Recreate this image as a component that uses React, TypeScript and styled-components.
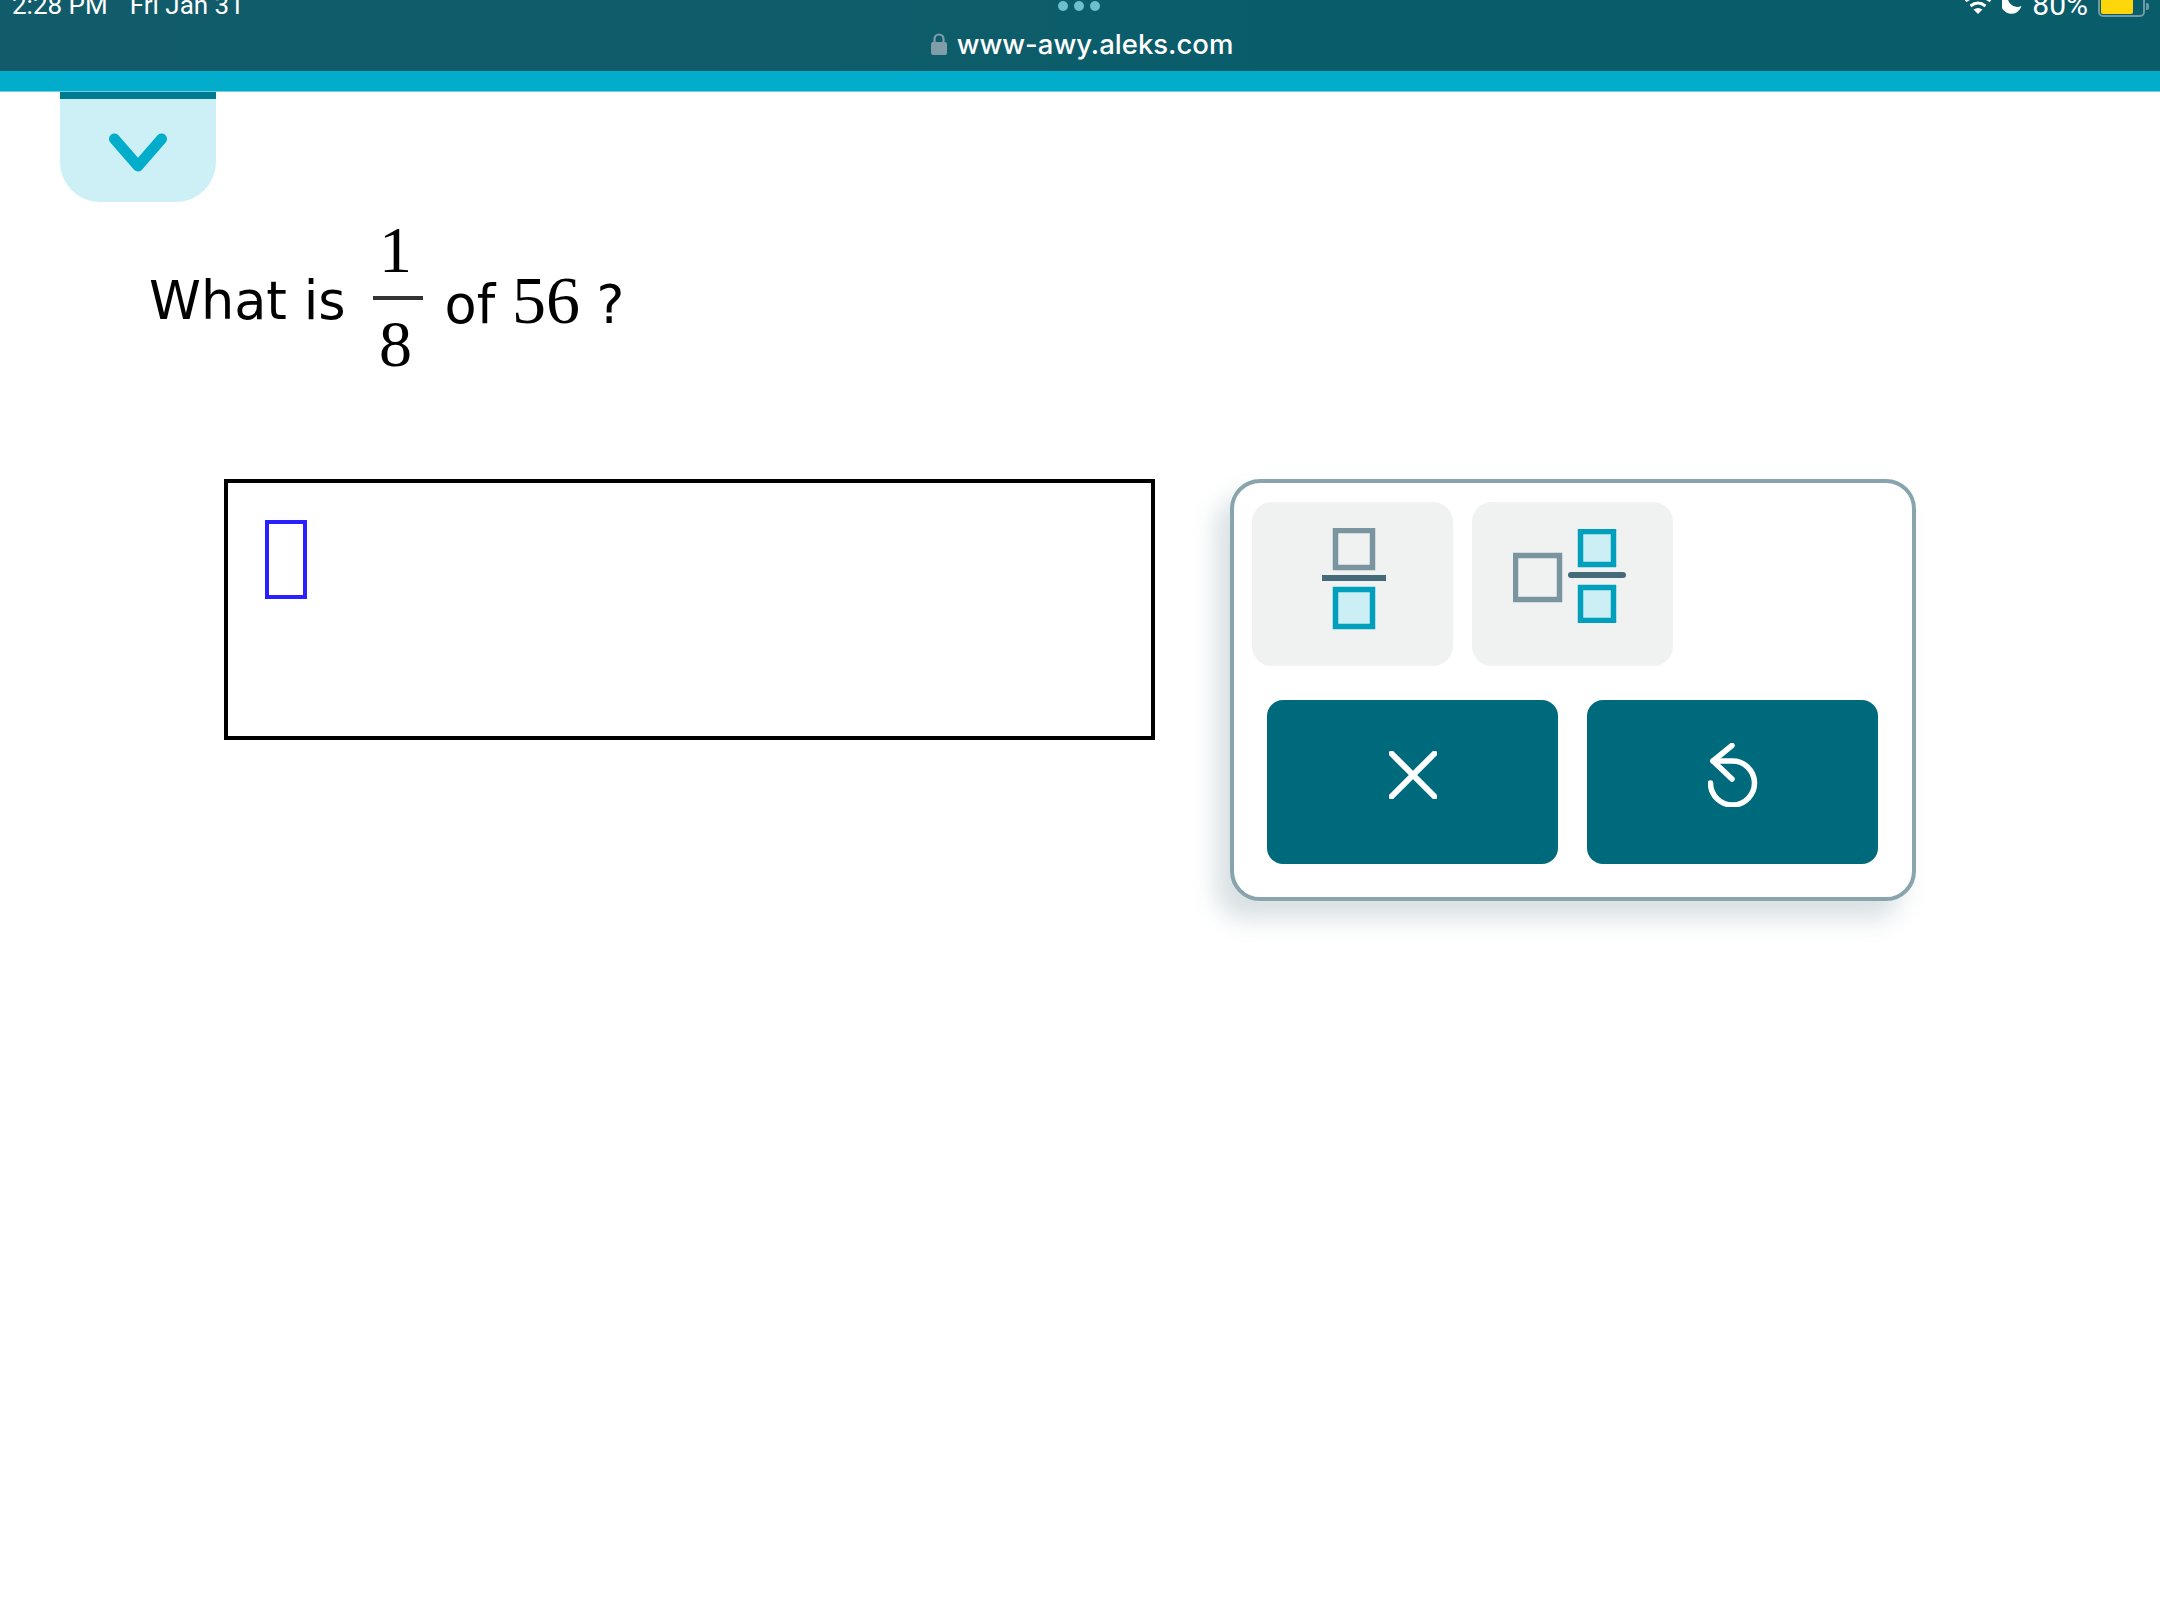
import React from "react";
import styled, { createGlobalStyle } from "styled-components";

const GlobalStyle = createGlobalStyle`
    html, body {
        margin: 0;
        padding: 0;
        background: #ffffff;
    }
`;

const Page = styled.div`
    width: 2160px;
    height: 1606px;
    overflow: hidden;
    background: #ffffff;
`;

const Chrome = styled.header`
    height: 71px;
    overflow: hidden;
    display: flex;
    flex-direction: column;
    background: linear-gradient(90deg, #115b6a 0%, #105c6b 35%, #095d6a 60%, #095c69 100%);
    color: #ffffff;
`;

const StatusRow = styled.div`
    height: 24px;
    margin-top: -7px;
    display: grid;
    grid-template-columns: 1fr auto 1fr;
    align-items: center;
    padding: 0 15px 0 12px;
    font-family: Roboto, "Liberation Sans", sans-serif;
    font-size: 26px;
    line-height: 24px;
    white-space: nowrap;
`;

const StatusGroup = styled.div<{ $gap: number; $end?: boolean }>`
    display: flex;
    align-items: center;
    justify-content: ${(p) => (p.$end ? "flex-end" : "flex-start")};
    gap: ${(p) => p.$gap}px;
`;

const BatteryLabel = styled.span`
    font-size: 30px;
`;

const Dots = styled.div`
    display: flex;
    gap: 6px;
    margin-top: 2px;
`;

const Dot = styled.span`
    width: 10px;
    height: 10px;
    border-radius: 50%;
    background: #6dbfcf;
`;

const Battery = styled.div`
    width: 47px;
    height: 24px;
    box-sizing: border-box;
    border: 2px solid #6f9aa5;
    border-radius: 5px;
    padding: 1px 10px 1px 1px;
    position: relative;
    &::after {
        content: "";
        position: absolute;
        right: -6px;
        top: 8px;
        width: 3px;
        height: 7px;
        background: #6f9aa5;
        border-radius: 0 2px 2px 0;
    }
`;

const BatteryFill = styled.div`
    height: 100%;
    background: #ffd60a;
    border-radius: 2px;
`;

const UrlRow = styled.div`
    margin-top: 9px;
    display: flex;
    align-items: center;
    justify-content: center;
    gap: 10px;
    padding-left: 4px;
    font-family: Inter, "Liberation Sans", sans-serif;
    font-weight: 500;
    font-size: 27.5px;
    line-height: 36px;
`;

const AccentBar = styled.div`
    height: 20px;
    background: #02adcb;
    border-bottom: 1px solid #6fd0e0;
`;

const DrawerTab = styled.button`
    display: flex;
    align-items: center;
    justify-content: center;
    width: 156px;
    height: 110px;
    margin-left: 60px;
    padding: 0;
    box-sizing: border-box;
    border: 0;
    border-top: 7px solid #007a91;
    border-radius: 0 0 40px 40px;
    background: #ccf0f5;
`;

const Question = styled.div`
    display: flex;
    align-items: center;
    height: 150px;
    margin-top: 20px;
    padding-left: 149px;
    font-family: "DejaVu Sans", Verdana, sans-serif;
    font-size: 52.5px;
    color: #000000;
    white-space: nowrap;
`;

const QuestionText = styled.span`
    margin-top: 7px;
`;

const MathNum = styled.span`
    font-family: "Liberation Serif", "Times New Roman", serif;
    font-size: 68px;
`;

const Fraction = styled.span`
    display: inline-flex;
    flex-direction: column;
    align-items: center;
    width: 50px;
    margin: 0 22px 0 27px;
    font-family: "Liberation Serif", "Times New Roman", serif;
    font-size: 66px;
`;

const FractionDigit = styled.span<{ $shift: number }>`
    height: 68px;
    line-height: 68px;
    margin-top: ${(p) => p.$shift}px;
    padding-right: 4px;
`;

const FractionBar = styled.span`
    align-self: stretch;
    height: 4px;
    margin-top: 12px;
    background: #333333;
`;

const Workspace = styled.div`
    display: flex;
    align-items: flex-start;
    gap: 75px;
    margin-top: 107px;
    padding-left: 224px;
`;

const AnswerBox = styled.div`
    width: 931px;
    height: 261px;
    box-sizing: border-box;
    border: 4px solid #000000;
    padding: 37px 0 0 37px;
`;

const Cursor = styled.div`
    width: 42px;
    height: 79px;
    box-sizing: border-box;
    border: 4.5px solid #2a20ff;
`;

const Palette = styled.div`
    width: 686px;
    height: 422px;
    box-sizing: border-box;
    border: 4px solid #88a4ad;
    border-radius: 30px;
    padding: 19px 0 0 18px;
    background: #ffffff;
    box-shadow: -14px 18px 24px rgba(90, 125, 140, 0.24);
`;

const TemplateRow = styled.div`
    display: flex;
    gap: 19px;
`;

const TemplateButton = styled.button`
    display: flex;
    align-items: flex-start;
    justify-content: center;
    width: 201px;
    height: 164px;
    padding: 0;
    border: 0;
    border-radius: 20px;
    background: #f0f2f2;
`;

const ActionRow = styled.div`
    display: flex;
    gap: 29px;
    margin: 34px 0 0 15px;
`;

const ActionButton = styled.button`
    display: flex;
    align-items: center;
    justify-content: center;
    width: 291px;
    height: 164px;
    padding: 0;
    border: 0;
    border-radius: 16px;
    background: #006a7d;
`;

const Wifi = () => (
    <svg width="28" height="18" viewBox="0 0 28 18" fill="none" stroke="#fff" strokeWidth="3">
        <path d="M1.5 5 Q14 -4 26.5 5" />
        <path d="M6.5 10 Q14 4 21.5 10" />
        <path d="M14 18 L9.5 13.5 Q14 10.5 18.5 13.5 Z" fill="#fff" stroke="none" />
    </svg>
);

const Moon = () => (
    <svg width="20" height="18" viewBox="0 0 20 18">
        <path d="M7 -3 A10.5 10.5 0 1 0 19.5 10 A9.5 9.5 0 0 1 7 -3 Z" fill="#fff" />
    </svg>
);

const Lock = () => (
    <svg width="16" height="22" viewBox="0 0 16 22">
        <path d="M3.5 10 V6 a4.5 4.5 0 0 1 9 0 V10" fill="none" stroke="#7f9ea8" strokeWidth="2.2" />
        <rect x="0" y="9" width="16" height="13" rx="2" fill="#7f9ea8" />
    </svg>
);

const Chevron = () => (
    <svg width="60" height="40" viewBox="0 0 60 40" style={{ marginTop: 4 }}>
        <path d="M6.5 6 L30 33 L53.5 6" fill="none" stroke="#02adcb" strokeWidth="11" strokeLinecap="round" strokeLinejoin="round" />
    </svg>
);

const FractionIcon = () => (
    <svg width="64" height="102" viewBox="0 0 64 102" style={{ marginTop: 26, marginLeft: 3 }}>
        <rect x="13.5" y="2.5" width="37" height="37" fill="none" stroke="#7a959f" strokeWidth="5.5" />
        <rect x="0" y="47" width="64" height="6" fill="#456a7a" />
        <rect x="13.5" y="61.5" width="37" height="37" fill="#cceff5" stroke="#00a0bd" strokeWidth="5.5" />
    </svg>
);

const MixedIcon = () => (
    <svg width="113" height="94" viewBox="0 0 113 94" style={{ marginTop: 27, marginRight: 6 }}>
        <rect x="2.5" y="26.5" width="44" height="44" fill="none" stroke="#7a959f" strokeWidth="5.5" />
        <rect x="67.5" y="2.5" width="33" height="33" fill="#cceff5" stroke="#00a0bd" strokeWidth="5.5" />
        <rect x="55" y="43" width="58" height="6" rx="3" fill="#456a7a" />
        <rect x="67.5" y="58.5" width="33" height="33" fill="#cceff5" stroke="#00a0bd" strokeWidth="5.5" />
    </svg>
);

const CloseIcon = () => (
    <svg width="48" height="48" viewBox="0 0 48 48" style={{ marginTop: -15 }}>
        <path d="M2.5 2.5 L45.5 45.5 M45.5 2.5 L2.5 45.5" fill="none" stroke="#fff" strokeWidth="6" strokeLinecap="round" />
    </svg>
);

const UndoIcon = () => (
    <svg width="50" height="64" viewBox="0 0 50 64" style={{ marginTop: -14 }}>
        <path d="M24 2.5 L5 18 L24 36" fill="none" stroke="#fff" strokeWidth="5.5" strokeLinecap="round" strokeLinejoin="round" />
        <path d="M5 18 H24 A22 22 0 1 1 2.5 40" fill="none" stroke="#fff" strokeWidth="5.5" strokeLinecap="round" />
    </svg>
);

const App = () => {
    return (
        <Page>
            <GlobalStyle />
            <Chrome>
                <StatusRow>
                    <StatusGroup $gap={22}>
                        <span>2:28 PM</span>
                        <span>Fri Jan 31</span>
                    </StatusGroup>
                    <Dots>
                        <Dot />
                        <Dot />
                        <Dot />
                    </Dots>
                    <StatusGroup $gap={10} $end>
                        <Wifi />
                        <Moon />
                        <BatteryLabel>80%</BatteryLabel>
                        <Battery>
                            <BatteryFill />
                        </Battery>
                    </StatusGroup>
                </StatusRow>
                <UrlRow>
                    <Lock />
                    <span>www-awy.aleks.com</span>
                </UrlRow>
            </Chrome>
            <AccentBar />
            <DrawerTab aria-label="Collapse">
                <Chevron />
            </DrawerTab>
            <Question>
                <QuestionText>What is</QuestionText>
                <Fraction>
                    <FractionDigit $shift={0}>1</FractionDigit>
                    <FractionBar />
                    <FractionDigit $shift={10}>8</FractionDigit>
                </Fraction>
                <QuestionText>
                    of&nbsp;<MathNum>56</MathNum>&nbsp;?
                </QuestionText>
            </Question>
            <Workspace>
                <AnswerBox>
                    <Cursor />
                </AnswerBox>
                <Palette>
                    <TemplateRow>
                        <TemplateButton>
                            <FractionIcon />
                        </TemplateButton>
                        <TemplateButton>
                            <MixedIcon />
                        </TemplateButton>
                    </TemplateRow>
                    <ActionRow>
                        <ActionButton>
                            <CloseIcon />
                        </ActionButton>
                        <ActionButton>
                            <UndoIcon />
                        </ActionButton>
                    </ActionRow>
                </Palette>
            </Workspace>
        </Page>
    );
};

export default App;
